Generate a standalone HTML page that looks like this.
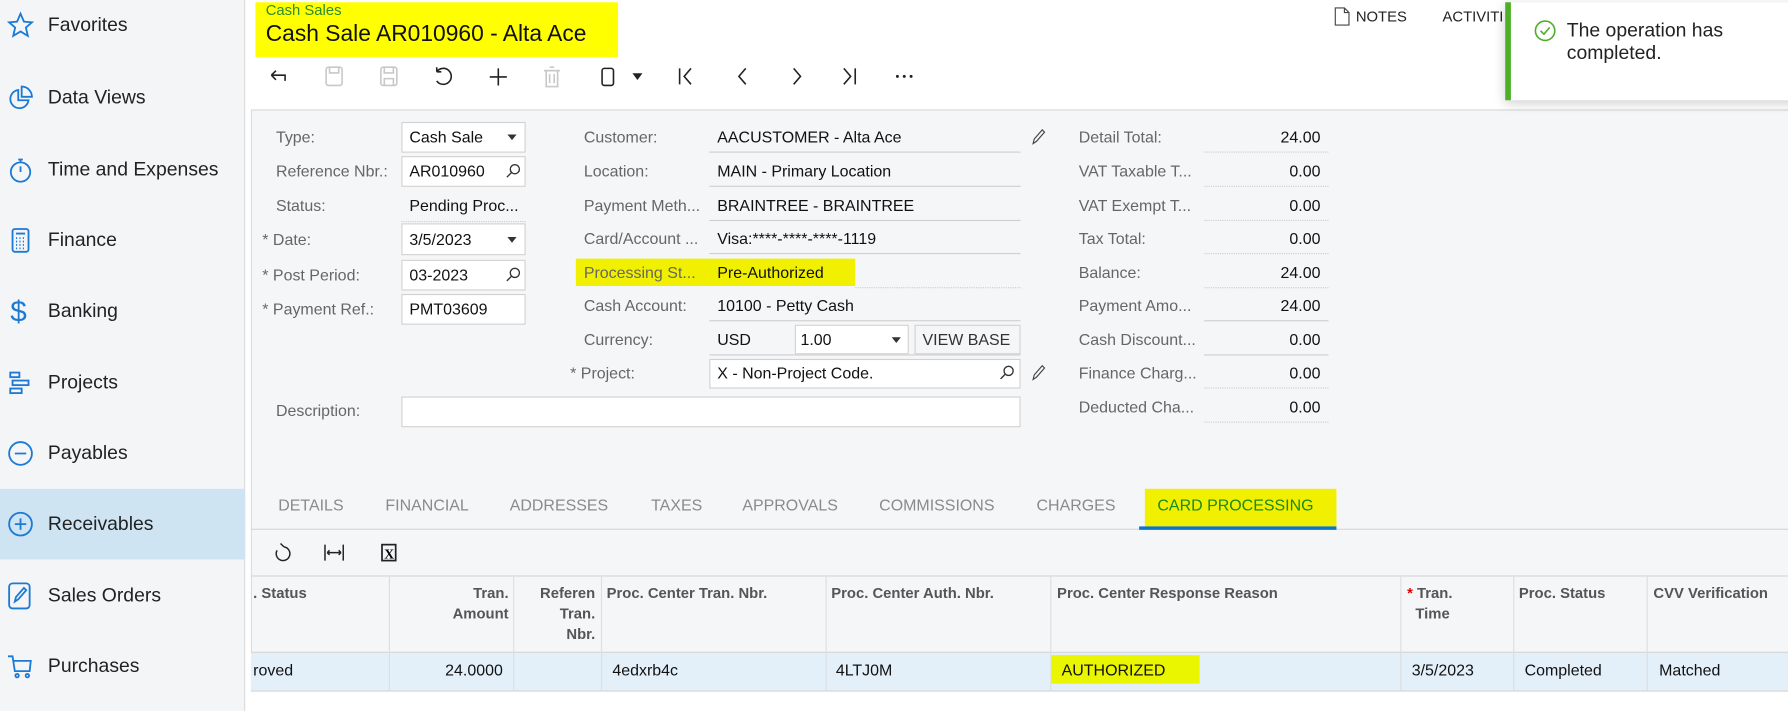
<!DOCTYPE html>
<html><head><meta charset="utf-8"><style>
*{margin:0;padding:0;box-sizing:border-box}
body{width:1788px;height:711px;overflow:hidden;background:#fff;font-family:"Liberation Sans",sans-serif;}
#w{position:absolute;left:0;top:0;width:1568px;height:624px;transform:scale(1.1403,1.1394);transform-origin:0 0;overflow:hidden;background:#fff}
.a{position:absolute;white-space:nowrap}
.sb{position:absolute;left:0;top:0;width:215px;height:624px;background:#f4f5f7;border-right:1px solid #dcdcdc}
.nav{position:absolute;left:42px;font-size:17px;color:#222;transform:translateY(-50%)}
.ic{position:absolute;left:6px;width:24px;height:24px;transform:translateY(-50%)}
.lbl{position:absolute;font-size:14px;color:#666;transform:translateY(-50%);white-space:nowrap}
.val{position:absolute;font-size:14px;color:#111;transform:translateY(-50%);white-space:nowrap}
.box{position:absolute;background:#fff;border:1px solid #d2d2d2}
.ul{position:absolute;height:1px;background:#cfcfcf}
.dl{position:absolute;height:1px;border-top:1px dotted #ccc}
.tab{position:absolute;top:443px;font-size:14px;color:#8a8a8a;transform:translateY(-50%)}
.th{position:absolute;font-size:13px;color:#555;font-weight:bold;line-height:18px}
.td{position:absolute;top:588px;font-size:14px;color:#111;transform:translateY(-50%)}
.cb{position:absolute;top:505px;height:102px;width:1px;background:#dedede}
.mg{position:absolute;width:14px;height:14px}
.car{position:absolute;width:0;height:0;border-left:4px solid transparent;border-right:4px solid transparent;border-top:5px solid #333}
</style></head><body><div id="w">
<div class="sb"></div>
<div style="position:absolute;left:0;top:429px;width:215px;height:62px;background:#cfe4f3"></div>
<svg class="ic" style="top:22px" viewBox="0 0 24 24" fill="none" stroke="#1c7ad4" stroke-width="1.6"><path d="M12 2l3 7 7 .6-5.3 4.6 1.7 7.3L12 17.6 5.6 21.5l1.7-7.3L2 9.6 9 9z"/></svg>
<div class="nav" style="top:22px">Favorites</div>
<svg class="ic" style="top:86px" viewBox="0 0 24 24" fill="none" stroke="#1c7ad4" stroke-width="1.6"><path d="M10 5a8 8 0 1 0 9 9h-9z"/><path d="M13 2v9h9a9 9 0 0 0-9-9z"/></svg>
<div class="nav" style="top:86px">Data Views</div>
<svg class="ic" style="top:149px" viewBox="0 0 24 24" fill="none" stroke="#1c7ad4" stroke-width="1.6"><circle cx="12" cy="14" r="8.5"/><path d="M12 14V9M10 3h4M12 3v2.5"/></svg>
<div class="nav" style="top:149px">Time and Expenses</div>
<svg class="ic" style="top:211px" viewBox="0 0 24 24" fill="none" stroke="#1c7ad4" stroke-width="1.6"><rect x="5" y="2" width="14" height="20" rx="2"/><path d="M8 6h8M8 10h1M11 10h1M14 10h1M8 13h1M11 13h1M14 13h1M8 16h1M11 16h1M14 16h1M8 19h1M11 19h1M14 19h1"/></svg>
<div class="nav" style="top:211px">Finance</div>
<div class="a" style="left:9px;top:258px;font-size:26px;color:#1c7ad4">$</div>
<div class="nav" style="top:273px">Banking</div>
<svg class="ic" style="top:336px" viewBox="0 0 24 24" fill="none" stroke="#1c7ad4" stroke-width="1.6"><rect x="3" y="3" width="8" height="4"/><rect x="5" y="10" width="14" height="4"/><rect x="3" y="17" width="10" height="4"/></svg>
<div class="nav" style="top:336px">Projects</div>
<svg class="ic" style="top:398px" viewBox="0 0 24 24" fill="none" stroke="#1c7ad4" stroke-width="1.6"><circle cx="12" cy="12" r="10"/><path d="M7 12h10"/></svg>
<div class="nav" style="top:398px">Payables</div>
<svg class="ic" style="top:460px" viewBox="0 0 24 24" fill="none" stroke="#1c7ad4" stroke-width="1.6"><circle cx="12" cy="12" r="10"/><path d="M7 12h10M12 7v10"/></svg>
<div class="nav" style="top:460px">Receivables</div>
<svg class="ic" style="top:523px" viewBox="0 0 24 24" fill="none" stroke="#1c7ad4" stroke-width="1.6"><rect x="2" y="1" width="18" height="22" rx="3"/><path d="M7 17l1-4 7-8 2 2-7 8z"/></svg>
<div class="nav" style="top:523px">Sales Orders</div>
<svg class="ic" style="top:585px" viewBox="0 0 24 24" fill="none" stroke="#1c7ad4" stroke-width="1.6"><path d="M1 3h4l2 13h13l1-9H6"/><circle cx="9" cy="20" r="1.5"/><circle cx="18" cy="20" r="1.5"/></svg>
<div class="nav" style="top:585px">Purchases</div>

<!-- header -->
<div style="position:absolute;left:224px;top:2px;width:318px;height:48px;background:#ffff00"></div>
<div class="a" style="left:233px;top:1px;font-size:13px;color:#2e8b2e">Cash Sales</div>
<div class="a" style="left:233px;top:19px;font-size:20px;color:#111">Cash Sale AR010960 - Alta Ace</div>
<svg style="position:absolute;left:230px;top:55px" width="590" height="24" fill="none" stroke="#222" stroke-width="1.4">
<path d="M8 11h12v5M8 11l4-4M8 11l4 4"/>
<g stroke="#c8c8c8"><rect x="56" y="4" width="14" height="16" rx="2"/><path d="M59 4v5h8V4"/><rect x="104" y="4" width="14" height="16" rx="2"/><path d="M107 4v5h8V4M107 20v-6h8v6"/><rect x="249" y="7" width="10" height="14"/><path d="M247 7h14M252 4h4M252 10v8M256 10v8"/></g>
<path d="M153 8a7 7 0 1 1 0 8M153 8v-4M153 8h4"/>
<path d="M207 5v15M199.5 12.5h15"/>
<rect x="298" y="5" width="10" height="15" rx="2"/>
<path d="M326 10l3 4 3-4z" fill="#222"/>
<path d="M366 5v14M376 5l-6 7 6 7M424 5l-6 7 6 7M466 5l6 7-6 7M510 5l6 7-6 7M520 5v14"/>
<g fill="#222" stroke="none"><circle cx="557" cy="12" r="1.3"/><circle cx="563" cy="12" r="1.3"/><circle cx="569" cy="12" r="1.3"/></g>
</svg>
<svg style="position:absolute;left:1170px;top:6px" width="14" height="17" fill="none" stroke="#444" stroke-width="1"><path d="M1 1h8l4 4v11H1zM9 1v4h4"/></svg>
<div class="a" style="left:1189px;top:7px;font-size:13px;color:#222">NOTES</div>
<div class="a" style="left:1265px;top:7px;font-size:13px;color:#222">ACTIVITI</div>
<div style="position:absolute;left:220px;top:96px;width:1348px;height:1px;background:#d6d6d6"></div>
<!-- form bg -->
<div style="position:absolute;left:220px;top:97px;width:1348px;height:371px;background:#f5f6f8;border-left:1px solid #dcdcdc"></div>
<div style="position:absolute;left:220px;top:468px;width:1348px;height:37px;background:#f5f6f8;border-left:1px solid #dcdcdc"></div>
<div style="position:absolute;left:220px;top:505px;width:1348px;height:67px;background:#f5f6f8;border-left:1px solid #dcdcdc"></div>

<!-- col1 -->
<div class="lbl" style="left:242px;top:120px">Type:</div>
<div class="box" style="left:352px;top:107px;width:109px;height:27px"></div>
<div class="val" style="left:359px;top:120px">Cash Sale</div><div class="car" style="left:445px;top:118px"></div>
<div class="lbl" style="left:242px;top:150px">Reference Nbr.:</div>
<div class="box" style="left:352px;top:137px;width:109px;height:27px"></div>
<div class="val" style="left:359px;top:150px">AR010960</div>
<svg class="mg" style="left:443px;top:143px" viewBox="0 0 14 14" fill="none" stroke="#333" stroke-width="1.2"><circle cx="8.5" cy="5.5" r="4"/><path d="M5.5 8.5L1.5 12.5"/></svg>
<div class="lbl" style="left:242px;top:180px">Status:</div>
<div class="val" style="left:359px;top:180px">Pending Proc...</div>
<div class="dl" style="left:352px;top:194px;width:109px"></div>
<div class="lbl" style="left:230px;top:210px">* Date:</div>
<div class="box" style="left:352px;top:196px;width:109px;height:28px"></div>
<div class="val" style="left:359px;top:210px">3/5/2023</div><div class="car" style="left:445px;top:208px"></div>
<div class="lbl" style="left:230px;top:241px">* Post Period:</div>
<div class="box" style="left:352px;top:228px;width:109px;height:27px"></div>
<div class="val" style="left:359px;top:241px">03-2023</div>
<svg class="mg" style="left:443px;top:234px" viewBox="0 0 14 14" fill="none" stroke="#333" stroke-width="1.2"><circle cx="8.5" cy="5.5" r="4"/><path d="M5.5 8.5L1.5 12.5"/></svg>
<div class="lbl" style="left:230px;top:271px">* Payment Ref.:</div>
<div class="box" style="left:352px;top:258px;width:109px;height:27px"></div>
<div class="val" style="left:359px;top:271px">PMT03609</div>
<div class="lbl" style="left:242px;top:360px">Description:</div>
<div class="box" style="left:352px;top:348px;width:543px;height:27px"></div>

<!-- col2 -->
<div style="position:absolute;left:505px;top:227px;width:245px;height:24px;background:#f0f000"></div>
<div class="lbl" style="left:512px;top:120px">Customer:</div><div class="val" style="left:629px;top:120px">AACUSTOMER - Alta Ace</div><div class="ul" style="left:622px;top:133px;width:273px"></div>
<div class="lbl" style="left:512px;top:150px">Location:</div><div class="val" style="left:629px;top:150px">MAIN - Primary Location</div><div class="ul" style="left:622px;top:163px;width:273px"></div>
<div class="lbl" style="left:512px;top:180px">Payment Meth...</div><div class="val" style="left:629px;top:180px">BRAINTREE - BRAINTREE</div><div class="ul" style="left:622px;top:193px;width:273px"></div>
<div class="lbl" style="left:512px;top:209px">Card/Account ...</div><div class="val" style="left:629px;top:209px">Visa:****-****-****-1119</div><div class="ul" style="left:622px;top:222px;width:273px"></div>
<div class="lbl" style="left:512px;top:239px">Processing St...</div><div class="val" style="left:629px;top:239px">Pre-Authorized</div><div class="dl" style="left:750px;top:252px;width:145px"></div>
<div class="lbl" style="left:512px;top:268px">Cash Account:</div><div class="val" style="left:629px;top:268px">10100 - Petty Cash</div><div class="ul" style="left:622px;top:281px;width:273px"></div>
<div class="lbl" style="left:512px;top:298px">Currency:</div><div class="val" style="left:629px;top:298px">USD</div><div class="ul" style="left:622px;top:311px;width:273px"></div>
<div class="box" style="left:697px;top:285px;width:100px;height:26px"></div><div class="val" style="left:702px;top:298px">1.00</div><div class="car" style="left:782px;top:296px"></div>
<div class="box" style="left:802px;top:285px;width:93px;height:26px;background:#f5f6f8"></div><div class="val" style="left:809px;top:298px;color:#333">VIEW BASE</div>
<div class="lbl" style="left:500px;top:327px">* Project:</div>
<div class="box" style="left:622px;top:315px;width:273px;height:26px"></div><div class="val" style="left:629px;top:327px">X - Non-Project Code.</div>
<svg class="mg" style="left:876px;top:320px" viewBox="0 0 14 14" fill="none" stroke="#333" stroke-width="1.2"><circle cx="8.5" cy="5.5" r="4"/><path d="M5.5 8.5L1.5 12.5"/></svg>
<svg style="position:absolute;left:904px;top:112px" width="14" height="16" fill="none" stroke="#444" stroke-width="1"><path d="M2 14l1-4 7-8 2 2-7 8z"/></svg>
<svg style="position:absolute;left:904px;top:319px" width="14" height="16" fill="none" stroke="#444" stroke-width="1"><path d="M2 14l1-4 7-8 2 2-7 8z"/></svg>

<!-- col3 -->
<div class="lbl" style="left:946px;top:120px">Detail Total:</div><div class="val" style="right:410px;top:120px">24.00</div><div class="dl" style="left:1056px;top:133px;width:109px"></div>
<div class="lbl" style="left:946px;top:150px">VAT Taxable T...</div><div class="val" style="right:410px;top:150px">0.00</div><div class="dl" style="left:1056px;top:163px;width:109px"></div>
<div class="lbl" style="left:946px;top:180px">VAT Exempt T...</div><div class="val" style="right:410px;top:180px">0.00</div><div class="dl" style="left:1056px;top:193px;width:109px"></div>
<div class="lbl" style="left:946px;top:209px">Tax Total:</div><div class="val" style="right:410px;top:209px">0.00</div><div class="dl" style="left:1056px;top:222px;width:109px"></div>
<div class="lbl" style="left:946px;top:239px">Balance:</div><div class="val" style="right:410px;top:239px">24.00</div><div class="dl" style="left:1056px;top:252px;width:109px"></div>
<div class="lbl" style="left:946px;top:268px">Payment Amo...</div><div class="val" style="right:410px;top:268px">24.00</div><div class="ul" style="left:1056px;top:281px;width:109px"></div>
<div class="lbl" style="left:946px;top:298px">Cash Discount...</div><div class="val" style="right:410px;top:298px">0.00</div><div class="ul" style="left:1056px;top:311px;width:109px"></div>
<div class="lbl" style="left:946px;top:327px">Finance Charg...</div><div class="val" style="right:410px;top:327px">0.00</div><div class="dl" style="left:1056px;top:340px;width:109px"></div>
<div class="lbl" style="left:946px;top:357px">Deducted Cha...</div><div class="val" style="right:410px;top:357px">0.00</div><div class="dl" style="left:1056px;top:370px;width:109px"></div>

<!-- tabs -->
<div style="position:absolute;left:1004px;top:429px;width:168px;height:33px;background:#f0f000"></div>
<div class="tab" style="left:244px">DETAILS</div>
<div class="tab" style="left:338px">FINANCIAL</div>
<div class="tab" style="left:447px">ADDRESSES</div>
<div class="tab" style="left:571px">TAXES</div>
<div class="tab" style="left:651px">APPROVALS</div>
<div class="tab" style="left:771px">COMMISSIONS</div>
<div class="tab" style="left:909px">CHARGES</div>
<div class="tab" style="left:1015px;color:#1a8a1a">CARD PROCESSING</div>
<div style="position:absolute;left:220px;top:464px;width:1348px;height:1px;background:#d6d6d6"></div>
<div style="position:absolute;left:999px;top:462px;width:173px;height:3px;background:#0a74c9"></div>
<!-- grid toolbar -->
<svg style="position:absolute;left:236px;top:474px" width="130" height="22" fill="none" stroke="#222" stroke-width="1.3">
<path d="M13 6a6 6 0 1 1-6 3M13 6l-3-3"/>
<path d="M49 4v14M65 4v14M51 11h12M51 11l2-2M51 11l2 2M63 11l-2-2M63 11l-2 2"/>
<rect x="99" y="4" width="12" height="14" stroke-width="1.5"/>
<text x="101" y="16" font-size="12" font-weight="bold" fill="#000" stroke="none" font-family="Liberation Serif">X</text>
</svg>
<!-- grid -->
<div style="position:absolute;left:220px;top:505px;width:1348px;height:1px;background:#d6d6d6"></div>
<div style="position:absolute;left:220px;top:572px;width:1348px;height:35px;background:#e3f0f9;border-top:1px solid #d6d6d6;border-bottom:1px solid #d6d6d6"></div>
<div class="cb" style="left:341px"></div><div class="cb" style="left:450px"></div><div class="cb" style="left:527px"></div><div class="cb" style="left:724px"></div><div class="cb" style="left:921px"></div><div class="cb" style="left:1228px"></div><div class="cb" style="left:1327px"></div><div class="cb" style="left:1444px"></div>
<div class="th" style="left:222px;top:512px">. Status</div>
<div class="th" style="right:1122px;top:512px;text-align:right">Tran.<br>Amount</div>
<div class="th" style="right:1046px;top:512px;text-align:right;width:70px;overflow:hidden">Referen<br>Tran.<br>Nbr.</div>
<div class="th" style="left:532px;top:512px">Proc. Center Tran. Nbr.</div>
<div class="th" style="left:729px;top:512px">Proc. Center Auth. Nbr.</div>
<div class="th" style="left:927px;top:512px">Proc. Center Response Reason</div>
<div class="th" style="left:1234px;top:512px"><span style="color:#d00">*</span> Tran.<br>&nbsp; Time</div>
<div class="th" style="left:1332px;top:512px">Proc. Status</div>
<div class="th" style="left:1450px;top:512px">CVV Verification</div>
<div style="position:absolute;left:922px;top:575px;width:130px;height:25px;background:#eaf500"></div>
<div class="td" style="left:222px">roved</div>
<div class="td" style="right:1127px">24.0000</div>
<div class="td" style="left:537px">4edxrb4c</div>
<div class="td" style="left:733px">4LTJ0M</div>
<div class="td" style="left:931px">AUTHORIZED</div>
<div class="td" style="left:1238px">3/5/2023</div>
<div class="td" style="left:1337px">Completed</div>
<div class="td" style="left:1455px">Matched</div>

<!-- toast -->
<div style="position:absolute;left:1320px;top:2px;width:260px;height:86px;background:#fff;border-left:5px solid #4caf28;box-shadow:0 3px 10px rgba(0,0,0,.2)"></div>
<svg style="position:absolute;left:1345px;top:17px" width="20" height="20" fill="none" stroke="#4caf28" stroke-width="1.4"><circle cx="10" cy="10" r="8.5"/><path d="M6 10l3 3 5-6"/></svg>
<div class="a" style="left:1374px;top:17px;font-size:17px;color:#222;line-height:20px">The operation has<br>completed.</div>
</div></body></html>
